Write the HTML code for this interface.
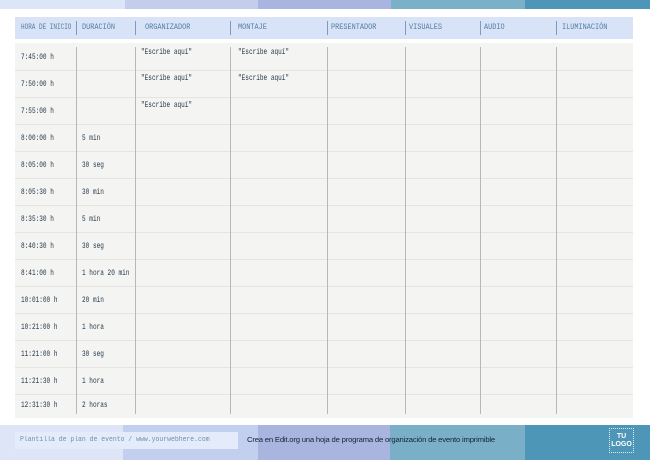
<!DOCTYPE html>
<html><head><meta charset="utf-8"><style>
*{margin:0;padding:0;box-sizing:border-box}
body{width:650px;height:460px;background:#fff;position:relative;overflow:hidden;font-family:"Liberation Mono","DejaVu Sans Mono",monospace}
.seg{position:absolute}
.hdr{position:absolute;left:15px;top:17px;width:618px;height:22px;background:#d9e3f7}
.h{position:absolute;top:6px;font-size:8px;color:#4f7fa3;transform:scaleX(0.86);transform-origin:left;white-space:nowrap}
.hl{position:absolute;top:4px;width:1px;height:14px;background:#7d9cc0}
.tbl{position:absolute;left:15px;top:43px;width:618px;height:375px;background:#f4f4f2}
.rl{position:absolute;left:0;width:618px;height:1px;background:#e4e4e2}
.vl{position:absolute;top:4px;width:1px;height:367px;background:#b8b8b6}
.t{position:absolute;font-size:8px;color:#1f3447;transform:scaleX(0.76);transform-origin:left;white-space:nowrap}
</style></head><body>
<div class="seg" style="left:0;top:0;width:125px;height:9px;background:#dde5f8"></div>
<div class="seg" style="left:125px;top:0;width:133px;height:9px;background:#c3cdec"></div>
<div class="seg" style="left:258px;top:0;width:133px;height:9px;background:#a9b5e0"></div>
<div class="seg" style="left:391px;top:0;width:134px;height:9px;background:#7ab0c8"></div>
<div class="seg" style="left:525px;top:0;width:125px;height:9px;background:#4e96b8"></div>

<div class="hdr">
<span class="h" style="left:6px;transform:scaleX(0.75)">HORA DE INICIO</span>
<div class="hl" style="left:61px"></div><span class="h" style="left:67px">DURACIÓN</span>
<div class="hl" style="left:120px"></div><span class="h" style="left:130px">ORGANIZADOR</span>
<div class="hl" style="left:215px"></div><span class="h" style="left:223px">MONTAJE</span>
<div class="hl" style="left:312px"></div><span class="h" style="left:316px">PRESENTADOR</span>
<div class="hl" style="left:390px"></div><span class="h" style="left:394px">VISUALES</span>
<div class="hl" style="left:465px"></div><span class="h" style="left:469px">AUDIO</span>
<div class="hl" style="left:541px"></div><span class="h" style="left:547px">ILUMINACIÓN</span>
</div>

<div class="tbl">
<div class="rl" style="top:27px"></div><div class="rl" style="top:54px"></div><div class="rl" style="top:81px"></div><div class="rl" style="top:108px"></div><div class="rl" style="top:135px"></div><div class="rl" style="top:162px"></div><div class="rl" style="top:189px"></div><div class="rl" style="top:216px"></div><div class="rl" style="top:243px"></div><div class="rl" style="top:270px"></div><div class="rl" style="top:297px"></div><div class="rl" style="top:324px"></div><div class="rl" style="top:351px"></div>
<div class="vl" style="left:61px"></div><div class="vl" style="left:120px"></div><div class="vl" style="left:215px"></div><div class="vl" style="left:312px"></div><div class="vl" style="left:390px"></div><div class="vl" style="left:465px"></div><div class="vl" style="left:541px"></div>
<span class="t" style="left:6px;top:10px">7:45:00 h</span>
<span class="t" style="left:6px;top:37px">7:50:00 h</span>
<span class="t" style="left:6px;top:64px">7:55:00 h</span>
<span class="t" style="left:6px;top:91px">8:00:00 h</span>
<span class="t" style="left:6px;top:118px">8:05:00 h</span>
<span class="t" style="left:6px;top:145px">8:05:30 h</span>
<span class="t" style="left:6px;top:172px">8:35:30 h</span>
<span class="t" style="left:6px;top:199px">8:40:30 h</span>
<span class="t" style="left:6px;top:226px">8:41:00 h</span>
<span class="t" style="left:6px;top:253px">10:01:00 h</span>
<span class="t" style="left:6px;top:280px">10:21:00 h</span>
<span class="t" style="left:6px;top:307px">11:21:00 h</span>
<span class="t" style="left:6px;top:334px">11:21:30 h</span>
<span class="t" style="left:6px;top:358px">12:31:30 h</span>
<span class="t" style="left:67px;top:91px">5 min</span>
<span class="t" style="left:67px;top:118px">30 seg</span>
<span class="t" style="left:67px;top:145px">30 min</span>
<span class="t" style="left:67px;top:172px">5 min</span>
<span class="t" style="left:67px;top:199px">30 seg</span>
<span class="t" style="left:67px;top:226px">1 hora 20 min</span>
<span class="t" style="left:67px;top:253px">20 min</span>
<span class="t" style="left:67px;top:280px">1 hora</span>
<span class="t" style="left:67px;top:307px">30 seg</span>
<span class="t" style="left:67px;top:334px">1 hora</span>
<span class="t" style="left:67px;top:358px">2 horas</span>
<span class="t" style="left:126px;top:5px">"Escribe aquí"</span>
<span class="t" style="left:126px;top:31px">"Escribe aquí"</span>
<span class="t" style="left:126px;top:58px">"Escribe aquí"</span>
<span class="t" style="left:223px;top:5px">"Escribe aquí"</span>
<span class="t" style="left:223px;top:31px">"Escribe aquí"</span>
</div>

<div class="seg" style="left:0;top:425px;width:123px;height:35px;background:#dde5f7"></div>
<div class="seg" style="left:123px;top:425px;width:135px;height:35px;background:#c3cfee"></div>
<div class="seg" style="left:258px;top:425px;width:132px;height:35px;background:#a9b5df"></div>
<div class="seg" style="left:390px;top:425px;width:135px;height:35px;background:#7aafc8"></div>
<div class="seg" style="left:525px;top:425px;width:125px;height:35px;background:#4e96b8"></div>
<div class="seg" style="left:15px;top:432px;width:223px;height:17px;background:#e4ebfb"></div>
<span style="position:absolute;left:20px;top:436px;font-size:7.5px;color:#6f8fb0;transform:scaleX(0.86);transform-origin:left;white-space:nowrap">Plantilla de plan de evento / www.yourwebhere.com</span>
<span style="position:absolute;left:247px;top:435px;font-size:7.7px;color:#14233a;font-family:'Liberation Sans',sans-serif;letter-spacing:-0.2px;white-space:nowrap">Crea en Edit.org una hoja de programa de organización de evento imprimible</span>
<div style="position:absolute;left:609px;top:428px;width:25px;height:25px;border:1px dotted #dfeaf2;color:#fff;font-family:'Liberation Sans',sans-serif;font-weight:bold;font-size:7px;line-height:8px;text-align:center;padding-top:4px">TU<br>LOGO</div>
</body></html>
